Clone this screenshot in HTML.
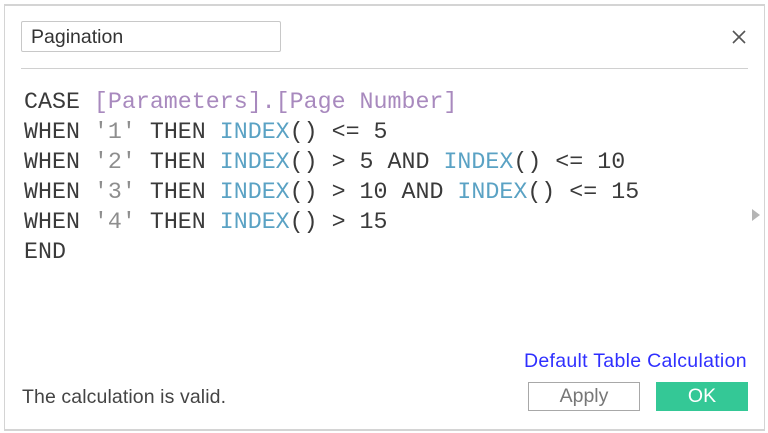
<!DOCTYPE html>
<html><head><meta charset="utf-8"><style>
body{margin:0;width:768px;height:433px;background:#fff;position:relative;overflow:hidden;font-family:"Liberation Sans",sans-serif}
.box{position:absolute;left:4px;top:4px;width:759px;height:423px;border:1px solid #d4d4d4;border-top-width:2px;border-bottom-width:2px}
.name{position:absolute;left:21px;top:21px;width:260px;height:31px;border:1px solid #c8c8c8;border-radius:2px;font-size:19.5px;color:#333;line-height:31px;padding-left:9px;box-sizing:border-box}
.x{position:absolute;left:731px;top:29px}
.hr{position:absolute;left:21px;top:68px;width:727px;height:1px;background:#d0d0d0}
.code{position:absolute;left:24px;top:87px;font-family:"Liberation Mono",monospace;font-size:23.3px;line-height:30px;color:#3a3a3a;white-space:pre}
.p{color:#a889be}.f{color:#5aa2c4}.s{color:#8e8e8e}
.tri{position:absolute;left:752px;top:209px;width:0;height:0;border-left:8px solid #b5b5b5;border-top:6px solid transparent;border-bottom:6px solid transparent}
.dtc{position:absolute;left:524px;top:350px;font-size:19.5px;letter-spacing:0.3px;color:#2f2fff}
.valid{position:absolute;left:22px;top:386px;font-size:19.5px;letter-spacing:0.1px;color:#444}
.apply{position:absolute;left:528px;top:382px;width:112px;height:29px;border:1px solid #a8a8a8;box-sizing:border-box;text-align:center;line-height:27px;font-size:19.5px;color:#777}
.ok{position:absolute;left:656px;top:382px;width:92px;height:29px;background:#34c896;text-align:center;line-height:29px;font-size:19.5px;color:#fff}
</style></head><body>
<div class="box"></div>
<div class="name">Pagination</div>
<svg class="x" width="16" height="16" viewBox="0 0 16 16"><path d="M2 2L14 14M14 2L2 14" stroke="#555" stroke-width="1.6"/></svg>
<div class="hr"></div>
<div class="code">CASE <span class="p">[Parameters].[Page Number]</span>
WHEN <span class="s">'1'</span> THEN <span class="f">INDEX</span>() &lt;= 5
WHEN <span class="s">'2'</span> THEN <span class="f">INDEX</span>() &gt; 5 AND <span class="f">INDEX</span>() &lt;= 10
WHEN <span class="s">'3'</span> THEN <span class="f">INDEX</span>() &gt; 10 AND <span class="f">INDEX</span>() &lt;= 15
WHEN <span class="s">'4'</span> THEN <span class="f">INDEX</span>() &gt; 15
END</div>
<div class="tri"></div>
<div class="dtc">Default Table Calculation</div>
<div class="valid">The calculation is valid.</div>
<div class="apply">Apply</div>
<div class="ok">OK</div>
</body></html>
